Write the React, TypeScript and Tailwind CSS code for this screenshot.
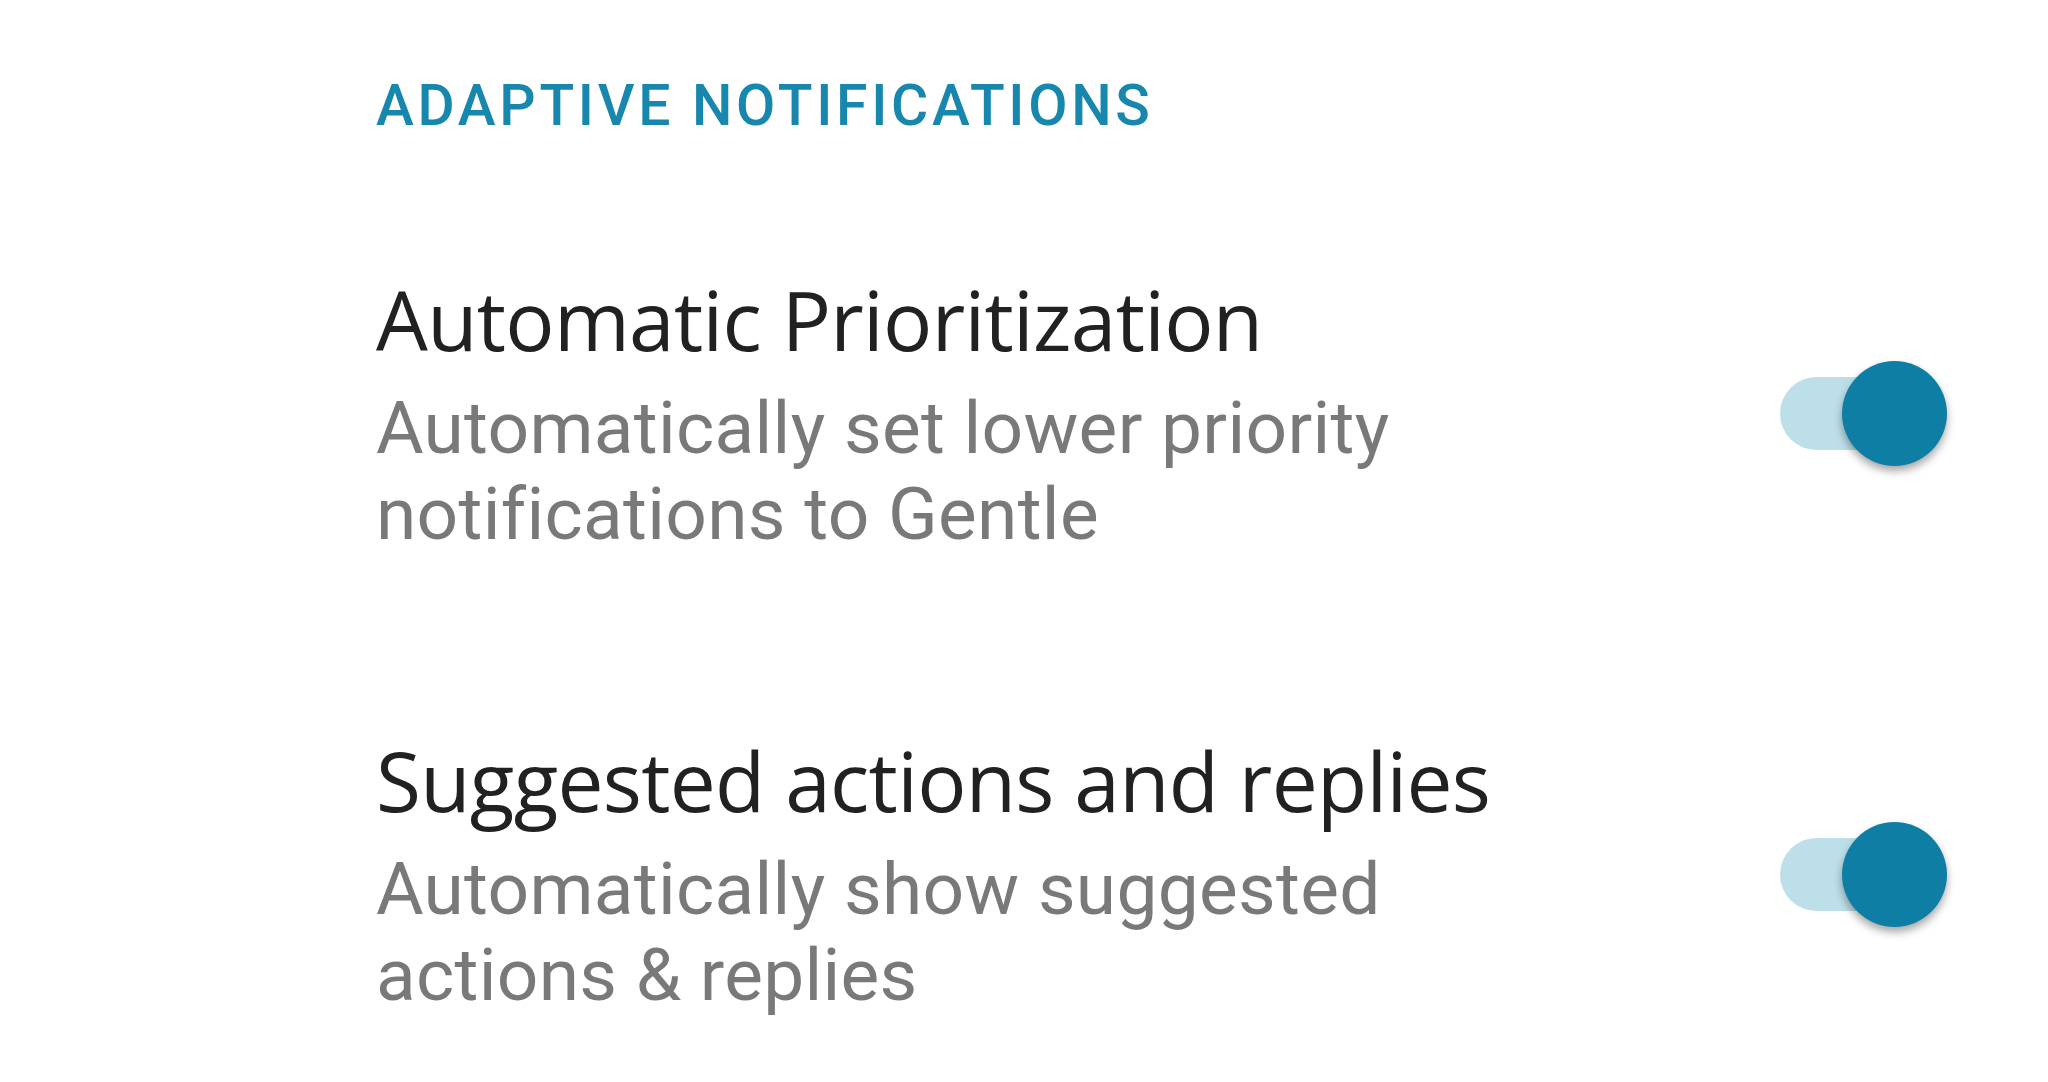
import React from 'react'

type Item = { title: string; lines: string[] }

const items: Item[] = [
  {
    title: 'Automatic Prioritization',
    lines: ['Automatically set lower priority', 'notifications to Gentle'],
  },
  {
    title: 'Suggested actions and replies',
    lines: ['Automatically show suggested', 'actions & replies'],
  },
]

function Toggle() {
  return (
    <div className="relative w-[167px] h-[105px] flex items-center">
      <div className="h-[73px] w-[150px] rounded-full bg-[#bddfe9]" />
      <div className="absolute right-0 top-0 h-[105px] w-[105px] rounded-full bg-[#0f7ea4] shadow-[0_5px_8px_rgba(0,0,0,0.35)]" />
    </div>
  )
}

export default function App() {
  return (
    <div className="min-h-[1082px] bg-white pl-[376px] pr-[101px] pt-[74px]">
      <h2
        className="text-[57px] leading-[64px] font-medium tracking-[0.065em] text-[#1787ad]"
        style={{ fontFamily: 'Roboto, sans-serif' }}
      >
        ADAPTIVE NOTIFICATIONS
      </h2>
      <div className="flex flex-col gap-[173px] mt-[131px]">
        {items.map((it) => (
          <div key={it.title} className="flex items-center justify-between">
            <div className="flex flex-col">
              <div
                className="text-[82px] leading-[100px] tracking-[-0.7px] text-[#212121]"
                style={{ fontFamily: '"Open Sans", sans-serif' }}
              >
                {it.title}
              </div>
              <div
                className="mt-[16px] text-[73px] leading-[86px] tracking-[0.3px] text-[#797979]"
                style={{ fontFamily: 'Roboto, sans-serif' }}
              >
                {it.lines.map((l) => (
                  <div key={l}>{l}</div>
                ))}
              </div>
            </div>
            <Toggle />
          </div>
        ))}
      </div>
    </div>
  )
}
